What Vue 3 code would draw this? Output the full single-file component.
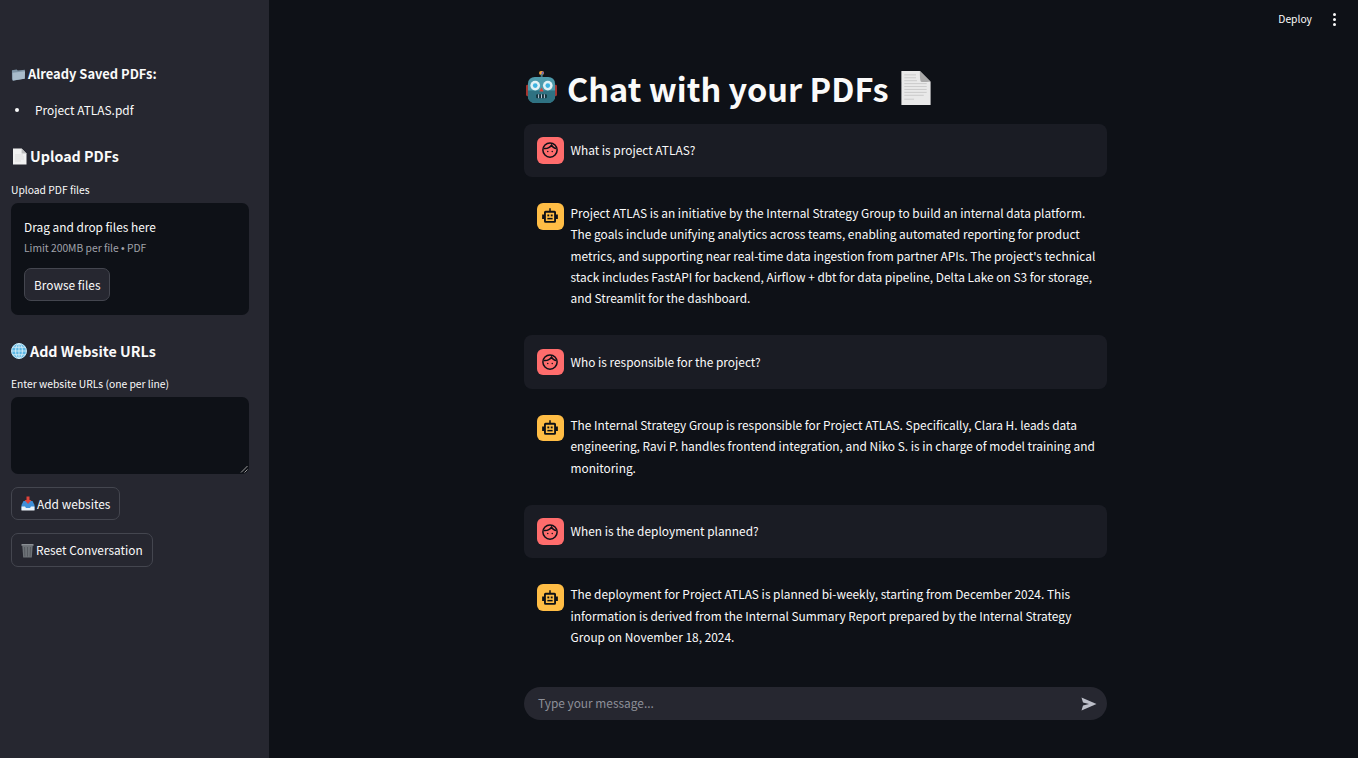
<template>
  <div class="app">
    <aside class="sidebar">
      <h3 class="side-title small">
        <svg class="emoji" width="15" height="15" viewBox="0 0 16 16"><path d="M1 3.500 6 2.600l1.200 1.200 7.600-1v9.400L2 14.600 1 13z" fill="#7f95a6"/><path d="M1.600 6 15 4.400l-.4 8.200L2 14.400z" fill="#a9bccb"/></svg>
        Already Saved PDFs:
      </h3>
      <ul class="saved">
        <li>Project ATLAS.pdf</li>
      </ul>

      <h2 class="side-title upload-title">
        <svg class="emoji doc" width="15" height="17" viewBox="0 0 15 17"><path d="M1 .5h8.600L14.500 5.400v11H1z" fill="#f1f1f1"/><path d="M9.600.5 14.500 5.400H9.600z" fill="#bdbdbd"/><path d="M3 7h8M3 9h9M3 11h9M3 13h6" stroke="#d5d5d5" stroke-width=".7"/></svg>
        Upload PDFs
      </h2>
      <label class="field-label">Upload PDF files</label>
      <div class="dropzone">
        <div class="drop-main">Drag and drop files here</div>
        <div class="drop-sub">Limit 200MB per file <span class="dot">•</span> PDF</div>
        <button class="btn browse">Browse files</button>
      </div>

      <h2 class="side-title web-title">
        <svg class="emoji" width="16" height="16" viewBox="0 0 16 16">
          <circle cx="8" cy="8" r="7.800" fill="#5cb8e6"/>
          <g fill="none" stroke="#d8eef7" stroke-width=".9"><circle cx="8" cy="8" r="7.400"/><ellipse cx="8" cy="8" rx="3.400" ry="7.400"/><path d="M8 .6v14.800M.6 8h14.800M1.600 4.200h12.800M1.600 11.800h12.800"/></g>
        </svg>
        Add Website URLs
      </h2>
      <label class="field-label url-label">Enter website URLs (one per line)</label>
      <div class="textarea">
        <svg class="grip" width="8" height="8" viewBox="0 0 8 8"><path d="M1 7.500 7.500 1M4.500 7.500l3-3" stroke="#9a9a9a" stroke-width="1"/></svg>
      </div>

      <button class="btn side-btn add-btn">
        <svg class="emoji" width="14" height="15" viewBox="0 0 14 15"><path d="M.5 9 2.500 5h9l2 4v5H.5z" fill="#3f8fd8"/><path d="M.5 10.500h3.500l1 1.500h4l1-1.500h3.500V14.500H.5z" fill="#eaf2f8"/><path d="M5.500.5h3v3.500h2L7 8 3.500 4h2z" fill="#e0433a"/></svg>
        Add websites
      </button>
      <button class="btn side-btn reset-btn">
        <svg class="emoji" width="13" height="15" viewBox="0 0 13 15"><path d="M.5 1h12v1.800H.5z" fill="#8a8f94"/><path d="M1.300 2.800h10.400l-.9 11.700H2.200z" fill="#6d7277"/><path d="M3.500 4l.4 9.500M6.500 4v9.500M9.500 4l-.4 9.500" stroke="#50545a" stroke-width=".8"/></svg>
        Reset Conversation
      </button>
    </aside>

    <main class="main">
      <div class="top-actions">
        <span class="deploy">Deploy</span>
        <span class="kebab"><i></i><i></i><i></i></span>
      </div>

      <div class="column">
        <h1 class="title">
          <svg class="title-emoji robot" width="31" height="35" viewBox="0 0 32 36">
            <rect x="13.500" y="0" width="5" height="4" rx="2" fill="#f2a33a"/>
            <path d="M16.200 .6h2l-.4 2.400h-1.600z" fill="#6a5bc5"/>
            <rect x="15.200" y="3" width="2" height="3" fill="#4a7f8f"/>
            <rect x="0" y="14" width="3" height="12" rx="1.500" fill="#a8322c"/>
            <rect x="29" y="14" width="3" height="12" rx="1.500" fill="#a8322c"/>
            <rect x="2" y="6" width="28" height="27" rx="7" fill="#4d9aab"/>
            <path d="M2 20h28v6a7 7 0 0 1-7 7H9a7 7 0 0 1-7-7z" fill="#2f7282"/>
            <circle cx="9.500" cy="15" r="5" fill="#e2f2f6"/><circle cx="22.500" cy="15" r="5" fill="#e2f2f6"/>
            <circle cx="9.500" cy="15" r="2.400" fill="#3fb3e0"/><circle cx="22.500" cy="15" r="2.400" fill="#3fb3e0"/>
            <path d="M16 17l2.200 4h-4.400z" fill="#d4453c"/>
            <rect x="10.500" y="24" width="11" height="4" rx="1" fill="#12333d"/>
            <path d="M13 24v4M16 24v4M19 24v4" stroke="#bcd" stroke-width="1"/>
          </svg>
          <span>Chat with your PDFs</span>
          <svg class="title-emoji page" width="32" height="36" viewBox="0 0 32 37">
            <path d="M1 1h19l11 11v24H1z" fill="#e9e9e9"/>
            <path d="M20 1c0 5 0 9 1 11 3 1 6 0 10 0z" fill="#a9a9a9"/>
            <path d="M4 5h12M4 8h12M4 11h13M4 14h23M4 17h23M4 20h23M4 23h23M4 26h20M4 30h10" stroke="#c2c2c2" stroke-width=".8"/>
          </svg>
        </h1>

        <div
          v-for="(m, i) in messages"
          :key="i"
          class="message"
          :class="m.role"
        >
          <span class="avatar">
            <svg v-if="m.role === 'user'" width="18" height="18" viewBox="0 0 24 24" fill="none" stroke="#0e1117" stroke-width="2">
              <circle cx="12" cy="12" r="9.500"/>
              <path d="M3.500 10c4 .5 8-.5 10.500-4.500 1.500 2.500 3.500 4.500 6.500 4.500"/>
              <circle cx="9" cy="14" r="1" fill="#0e1117" stroke="none"/>
              <circle cx="15" cy="14" r="1" fill="#0e1117" stroke="none"/>
            </svg>
            <svg v-else width="18" height="18" viewBox="0 0 24 24" fill="#0e1117">
              <path d="M11 1.500h2V5h5a2 2 0 0 1 2 2v3h2.500v6H20v3a2 2 0 0 1-2 2H6a2 2 0 0 1-2-2v-3H1.500v-6H4V7a2 2 0 0 1 2-2h5zM6.500 7.500v11h11v-11z"/>
              <rect x="8.500" y="10" width="2.500" height="2.500"/>
              <rect x="13" y="10" width="2.500" height="2.500"/>
              <rect x="8.500" y="14.500" width="7" height="2"/>
            </svg>
          </span>
          <div class="message-text">{{ m.text }}</div>
        </div>

        <div class="chat-input">
          <span class="placeholder">Type your message...</span>
          <svg width="16" height="14" viewBox="0 0 16 14"><path d="M.5.500 15.500 7 .5 13.500l1.500-5L8 7 2 5.500z" fill="#bcbec8"/></svg>
        </div>
      </div>
    </main>
  </div>
</template>

<script setup>
const messages = [
  { role: 'user', text: 'What is project ATLAS?' },
  {
    role: 'assistant',
    text: "Project ATLAS is an initiative by the Internal Strategy Group to build an internal data platform. The goals include unifying analytics across teams, enabling automated reporting for product metrics, and supporting near real-time data ingestion from partner APIs. The project's technical stack includes FastAPI for backend, Airflow + dbt for data pipeline, Delta Lake on S3 for storage, and Streamlit for the dashboard."
  },
  { role: 'user', text: 'Who is responsible for the project?' },
  {
    role: 'assistant',
    text: 'The Internal Strategy Group is responsible for Project ATLAS. Specifically, Clara H. leads data engineering, Ravi P. handles frontend integration, and Niko S. is in charge of model training and monitoring.'
  },
  { role: 'user', text: 'When is the deployment planned?' },
  {
    role: 'assistant',
    text: 'The deployment for Project ATLAS is planned bi-weekly, starting from December 2024. This information is derived from the Internal Summary Report prepared by the Internal Strategy Group on November 18, 2024.'
  }
]
</script>

<style>
html, body {
  margin: 0;
  background: #0e1117;
}
</style>

<style scoped>
.app {
  display: flex;
  height: 758px;
  overflow: hidden;
  background: #0e1117;
  color: #fafafa;
  font-family: "Noto Sans CJK SC", "Noto Sans", sans-serif;
  font-size: 11.900px;
  line-height: 21.300px;
}

.sidebar {
  width: 269px;
  flex-shrink: 0;
  box-sizing: border-box;
  padding: 64px 20px 0 11px;
  background: #262730;
}

.side-title {
  display: flex;
  align-items: center;
  gap: 3px;
  margin: 0;
  font-weight: 700;
  font-size: 14.300px;
  line-height: 24px;
}

.side-title.small {
  gap: 2px;
  font-size: 12.900px;
  line-height: 20px;
}

.upload-title {
  margin-top: 24px;
}

.doc {
  margin-left: 1px;
}

.web-title {
  margin-top: 24px;
}

.emoji {
  flex-shrink: 0;
}

.saved {
  margin: 15px 0 0;
  padding: 0;
  list-style: none;
}

.saved li {
  display: flex;
  align-items: center;
  line-height: 21px;
}

.saved li::before {
  content: "";
  width: 4px;
  height: 4px;
  margin: 0 16px 0 4px;
  border-radius: 50%;
  background: #fafafa;
}

.field-label {
  display: block;
  margin-top: 13px;
  font-size: 10.300px;
  line-height: 18px;
}

.url-label {
  margin-top: 12px;
}

.dropzone {
  margin-top: 4px;
  padding: 13px;
  height: 112px;
  box-sizing: border-box;
  background: #0e1117;
  border-radius: 7px;
}

.drop-main {
  line-height: 21px;
}

.drop-sub {
  margin-top: 1px;
  font-size: 10.300px;
  line-height: 20px;
  color: #a0a2aa;
}

.dot {
  font-family: "Liberation Sans", sans-serif;
}

.btn {
  display: flex;
  align-items: center;
  height: 33px;
  box-sizing: border-box;
  padding: 0 9px;
  background: #262730;
  border: 1px solid #44464f;
  border-radius: 7px;
  color: #fafafa;
  font: inherit;
}

.browse {
  margin-top: 9px;
}

.side-btn {
  gap: 2px;
}

.add-btn {
  margin-top: 13px;
}

.reset-btn {
  margin-top: 13px;
  height: 34px;
}

.textarea {
  position: relative;
  margin-top: 4px;
  height: 77px;
  background: #0e1117;
  border-radius: 7px;
}

.grip {
  position: absolute;
  right: 1px;
  bottom: 1px;
}

.main {
  position: relative;
  flex: 1;
  display: flex;
  justify-content: center;
}

.top-actions {
  position: absolute;
  top: 9px;
  right: 22px;
  display: flex;
  align-items: center;
  gap: 21px;
  height: 20px;
  font-size: 10.300px;
}

.kebab {
  display: flex;
  flex-direction: column;
  gap: 2px;
}

.kebab i {
  display: block;
  width: 3px;
  height: 3px;
  border-radius: 50%;
  background: #fafafa;
}

.column {
  width: 583px;
  margin-left: 4px;
}

.title {
  display: flex;
  align-items: center;
  gap: 10px;
  height: 48px;
  margin: 64px 0 11.500px;
  font-size: 32.500px;
  font-weight: 700;
  line-height: 48px;
  white-space: nowrap;
}

.title-emoji {
  flex-shrink: 0;
}

.robot {
  margin-left: 2px;
}

.page {
  margin-left: 1px;
}

.message {
  display: flex;
  gap: 7px;
  padding: 13px 8px 13px 13px;
  margin-bottom: 13px;
  border-radius: 8px;
}

.message.user {
  align-items: center;
  padding: 13.500px 13px;
  background: #1a1c24;
}

.message-text {
  margin: -1px 0 1px;
}

.avatar {
  display: flex;
  align-items: center;
  justify-content: center;
  flex-shrink: 0;
  width: 26.500px;
  height: 26.500px;
  border-radius: 6px;
  background: #ffbd45;
}

.user .avatar {
  background: #ff6c6c;
}

.chat-input {
  display: flex;
  align-items: center;
  justify-content: space-between;
  height: 33px;
  margin-top: 26px;
  padding: 0 10px 0 14px;
  background: #262730;
  border-radius: 17px;
}

.placeholder {
  margin-top: -2px;
  color: #8d8f98;
}
</style>
